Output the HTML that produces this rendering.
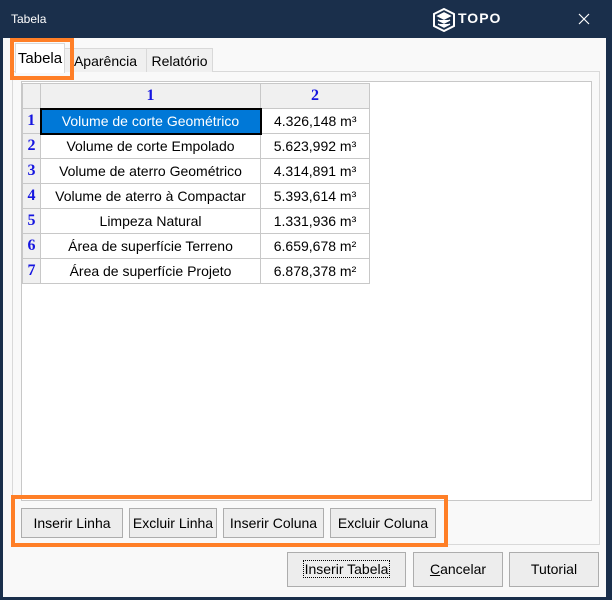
<!DOCTYPE html>
<html><head><meta charset="utf-8"><style>
*{margin:0;padding:0;box-sizing:border-box}
body{width:612px;height:600px;background:#1a2f4b;font-family:"Liberation Sans",sans-serif;position:relative;overflow:hidden;font-size:14px;color:#000}
.abs{position:absolute}
#title{left:11px;top:12px;color:#fff;font-size:12px}
#content{left:3px;top:38px;width:603px;height:559px;background:#f9f9f9}
.tab{position:absolute;background:#f0f0f0;border:1px solid #d9d9d9;border-bottom:none;font-size:14px;text-align:center}
#panel{left:12px;top:71px;width:588px;height:474px;border:1px solid #d9d9d9;background:#f9f9f9}
#grid{left:21px;top:81px;width:571px;height:420px;background:#fff;border:1px solid #c8c8c8}
table{position:absolute;left:22px;top:83px;border-collapse:collapse;font-size:14px}
td{border:1px solid #c8c8c8;height:25px;text-align:center;padding:0;white-space:nowrap}
td.h{background:#f0f0f0;color:#1515e0;font-weight:bold;font-family:"Liberation Serif",serif;font-size:16px}
.btn{position:absolute;background:#ededed;border:1px solid #adadad;font-size:14px;text-align:center;line-height:28px}
.or{position:absolute;border:4px solid #ff7f27}
</style></head><body>
<div class="abs" id="title">Tabela</div>
<svg class="abs" style="left:433px;top:8px" width="22" height="24" viewBox="0 0 22 24"><path d="M11 1 L21 6 V18 L11 23 L1 18 V6 Z" fill="none" stroke="#fff" stroke-width="2"/><path d="M5 8 L11 5 L17 8 L11 11 Z M5 12 L11 15 L17 12 M5 16 L11 19 L17 16" fill="#fff" stroke="#fff" stroke-width="1.5"/></svg>
<div class="abs" style="left:458px;top:10px;color:#fff;font-weight:bold;font-size:14px;letter-spacing:1px">TOPO</div>
<svg class="abs" style="left:578px;top:13px" width="12" height="12"><path d="M1 1 L11 11 M11 1 L1 11" stroke="#fff" stroke-width="1.2"/></svg>
<div class="abs" id="content"></div>
<div class="abs" id="panel"></div>
<div class="tab" style="left:64px;top:48px;width:83px;height:24px;line-height:24px">Aparência</div>
<div class="tab" style="left:146px;top:48px;width:67px;height:24px;line-height:24px">Relatório</div>
<div class="tab" style="left:15px;top:43px;width:50px;height:30px;line-height:30px;background:#fff;font-size:15px">Tabela</div>
<div class="or" style="left:10px;top:38px;width:64px;height:42px"></div>
<div class="abs" id="grid"></div>
<table>
<tr><td class="h" style="width:18px"></td><td class="h" style="width:220px">1</td><td class="h" style="width:109px">2</td></tr>
<tr><td class="h">1</td><td style="background:#0078d7;color:#fff;border:2px solid #000">Volume de corte Geométrico</td><td>4.326,148 m³</td></tr>
<tr><td class="h">2</td><td>Volume de corte Empolado</td><td>5.623,992 m³</td></tr>
<tr><td class="h">3</td><td>Volume de aterro Geométrico</td><td>4.314,891 m³</td></tr>
<tr><td class="h">4</td><td>Volume de aterro à Compactar</td><td>5.393,614 m³</td></tr>
<tr><td class="h">5</td><td>Limpeza Natural</td><td>1.331,936 m³</td></tr>
<tr><td class="h">6</td><td>Área de superfície Terreno</td><td>6.659,678 m²</td></tr>
<tr><td class="h">7</td><td>Área de superfície Projeto</td><td>6.878,378 m²</td></tr>
</table>
<div class="btn" style="left:21px;top:508px;width:102px;height:30px">Inserir Linha</div>
<div class="btn" style="left:129px;top:508px;width:88px;height:30px">Excluir Linha</div>
<div class="btn" style="left:223px;top:508px;width:101px;height:30px">Inserir Coluna</div>
<div class="btn" style="left:330px;top:508px;width:106px;height:30px">Excluir Coluna</div>
<div class="or" style="left:11px;top:495px;width:437px;height:52px"></div>
<div class="btn" style="left:287px;top:552px;width:119px;height:35px;line-height:33px"><span style="outline:1px dotted #000;padding:0 1px">Inserir Tabela</span></div>
<div class="btn" style="left:413px;top:552px;width:90px;height:35px;line-height:33px"><u>C</u>ancelar</div>
<div class="btn" style="left:509px;top:552px;width:90px;height:35px;line-height:33px">Tutorial</div>
</body></html>
